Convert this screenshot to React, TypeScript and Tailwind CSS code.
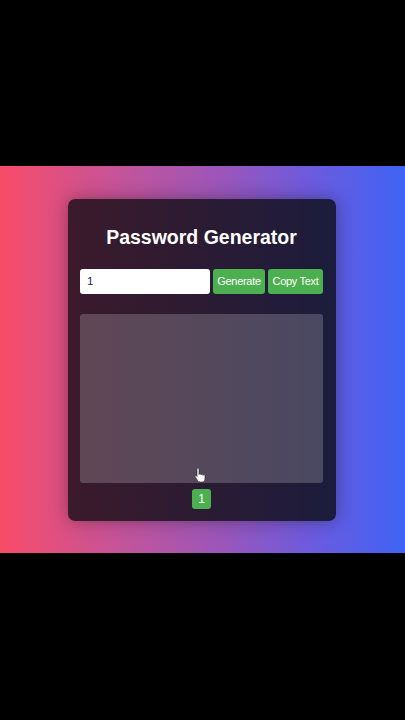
import React from "react";

export default function App() {
  return (
    <div className="w-[405px] h-[720px] bg-black flex flex-col" style={{ fontFamily: '"Liberation Sans", Arial, sans-serif' }}>
      <div className="h-[166px] shrink-0" />
      <div className="h-[387px] shrink-0 bg-[linear-gradient(to_right,#f84c69_0%,#c4549a_30%,#9a56bb_55%,#6a5be0_78%,#3f63f4_100%)] flex justify-center pt-[33px] pr-[1px]">
        <div className="w-[268px] h-[322px] rounded-[7px] bg-[linear-gradient(to_right,#3b1a2b,#2b1b33_50%,#1b1c3c)] shadow-[0_0_18px_rgba(0,0,0,0.35)] flex flex-col items-center pl-[12px] pr-[13px]">
          <h1 className="mt-[25px] text-white font-bold text-[19.5px] leading-[26px]">Password Generator</h1>
          <div className="mt-[19px] w-full flex gap-[3px] h-[25px]">
            <div className="w-[130px] bg-white rounded-[3px] text-[11.5px] text-gray-800 flex items-center pl-[7px]">1</div>
            <button className="w-[52px] bg-[#4caf50] rounded-[3px] text-white text-[11px] tracking-[-0.3px]">Generate</button>
            <button className="w-[55px] bg-[#4caf50] rounded-[3px] text-white text-[11px] tracking-[-0.3px]">Copy Text</button>
          </div>
          <div className="mt-[20px] w-full h-[169px] rounded-[3px] bg-white/20 relative">
            <svg className="absolute left-[114px] top-[154px]" width="12" height="15" viewBox="0 0 12 15">
              <path d="M3 1 L3 8.5 L2 7.5 Q1 7 0.8 8 L3.5 12.5 Q4.5 14 6.5 14 L8.5 14 Q11 14 11 11 L11 7.5 Q11 6.5 10 6.5 Q9 6.5 9 7.5 L9 7 Q9 6 8 6 Q7 6 7 7 L7 6.5 Q7 5.5 6 5.5 Q5 5.5 5 6.5 L5 1 Q5 0 4 0 Q3 0 3 1 Z" fill="#fff" stroke="#222" strokeWidth="0.6" />
            </svg>
          </div>
          <div className="mt-[6px] w-[19px] h-[20px] rounded-[3px] bg-[#4caf50] text-white text-[12px] flex items-center justify-center">1</div>
        </div>
      </div>
    </div>
  );
}
